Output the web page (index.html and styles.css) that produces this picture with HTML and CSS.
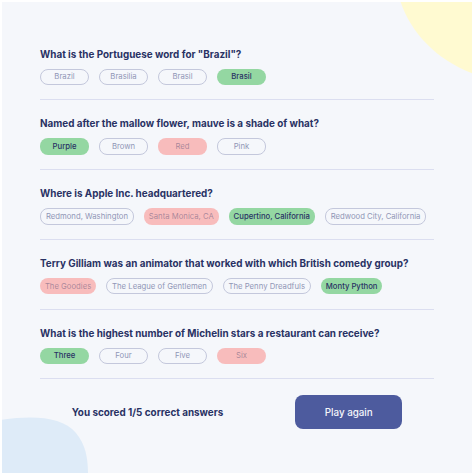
FILE: index.html
```html
<!DOCTYPE html>
<html>
<head>
<meta charset="utf-8">
<link rel="stylesheet" href="styles.css">
</head>
<body>
<div class="page">
  <svg class="blob blob-yellow" viewBox="0 0 74 76" width="74" height="76"><path d="M0 0 C10 32 36 60 74 74 L74 0 Z" fill="#FFFAD1"/></svg>
  <svg class="blob blob-blue" viewBox="0 0 90 58" width="90" height="58"><path d="M0 3 C35 -2 62 0 76 16 C86 28 88 42 88 58 L0 58 Z" fill="#DEEBF8"/></svg>
  <main class="quiz">
    <section class="question">
      <h2 class="q-title">What is the Portuguese word for "Brazil"?</h2>
      <div class="answers">
        <span class="chip faded">Brazil</span>
        <span class="chip faded">Brasilia</span>
        <span class="chip faded">Brasil</span>
        <span class="chip correct">Brasil</span>
      </div>
    </section>
    <section class="question">
      <h2 class="q-title">Named after the mallow flower, mauve is a shade of what?</h2>
      <div class="answers">
        <span class="chip correct">Purple</span>
        <span class="chip faded">Brown</span>
        <span class="chip wrong">Red</span>
        <span class="chip faded">Pink</span>
      </div>
    </section>
    <section class="question">
      <h2 class="q-title">Where is Apple Inc. headquartered?</h2>
      <div class="answers">
        <span class="chip faded">Redmond, Washington</span>
        <span class="chip wrong">Santa Monica, CA</span>
        <span class="chip correct">Cupertino, California</span>
        <span class="chip faded">Redwood City, California</span>
      </div>
    </section>
    <section class="question">
      <h2 class="q-title">Terry Gilliam was an animator that worked with which British comedy group?</h2>
      <div class="answers">
        <span class="chip wrong">The Goodies</span>
        <span class="chip faded">The League of Gentlemen</span>
        <span class="chip faded">The Penny Dreadfuls</span>
        <span class="chip correct">Monty Python</span>
      </div>
    </section>
    <section class="question">
      <h2 class="q-title">What is the highest number of Michelin stars a restaurant can receive?</h2>
      <div class="answers">
        <span class="chip correct">Three</span>
        <span class="chip faded">Four</span>
        <span class="chip faded">Five</span>
        <span class="chip wrong">Six</span>
      </div>
    </section>
    <footer class="result">
      <p class="score">You scored 1/5 correct answers</p>
      <button class="play-btn">Play again</button>
    </footer>
  </main>
</div>
</body>
</html>
```
FILE: styles.css
```css
* { box-sizing: border-box; }
html, body { margin: 0; padding: 0; background: #ffffff; }
body { width: 474px; height: 475px; padding: 2px; }
.page {
  position: relative;
  width: 470px;
  height: 471px;
  background: #F5F7FB;
  overflow: hidden;
  font-family: Inter, "Noto Sans", sans-serif;
}
.blob { position: absolute; display: block; }
.blob-yellow { top: -2px; right: -2px; }
.blob-blue { left: -2px; bottom: -2px; }
.quiz {
  position: relative;
  padding: 28.5px 38px 0 38px;
}
.question {
  padding: 17px 0 14.3px;
  border-bottom: 1px solid #DBDEF0;
}
.q-title {
  margin: 0;
  font-size: 9.9px;
  line-height: 12px;
  font-weight: 700;
  color: #293264;
}
.answers {
  display: flex;
  gap: 10px;
  margin-top: 9px;
}
.chip {
  display: inline-flex;
  align-items: center;
  justify-content: center;
  height: 16.5px;
  min-width: 49px;
  padding: 0 4.9px;
  border-radius: 8px;
  font-size: 7.72px;
  white-space: nowrap;
}
.faded {
  border: 0.8px solid #C4C8DC;
  color: #9096B6;
}
.correct {
  background: #94D7A2;
  color: #293264;
  font-weight: 500;
}
.wrong {
  background: #F8BCBC;
  color: rgba(41, 50, 100, 0.4);
}
.result {
  display: flex;
  justify-content: center;
  align-items: center;
  gap: 72px;
  margin-top: 16px;
}
.score {
  margin: 0;
  font-size: 9.9px;
  font-weight: 700;
  color: #293264;
}
.play-btn {
  width: 107px;
  height: 34px;
  border: none;
  border-radius: 8px;
  background: #4D5B9E;
  color: #F5F7FB;
  font-family: Inter, "Noto Sans", sans-serif;
  font-size: 9.8px;
  font-weight: 500;
}
```
